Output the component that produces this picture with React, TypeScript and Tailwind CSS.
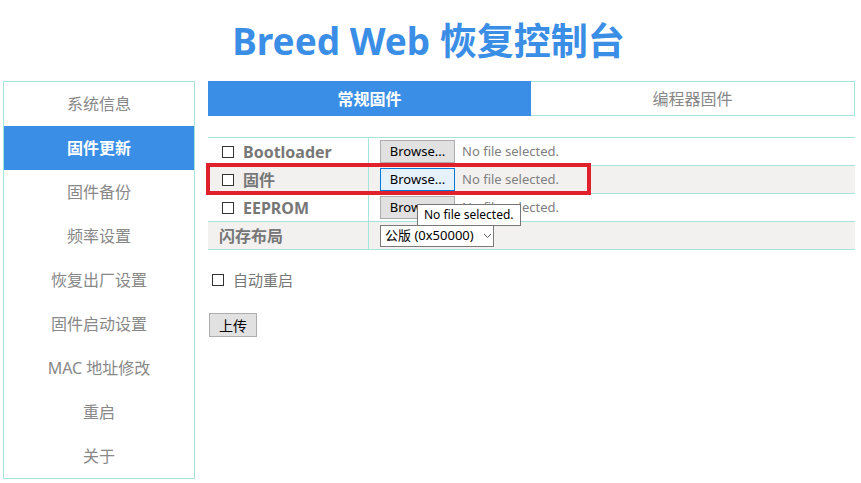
import React from "react";

const font = { fontFamily: '"Noto Sans", "Noto Sans CJK SC", sans-serif' };

function Box({ className = "" }: { className?: string }) {
  return <span className={"inline-block w-[12px] h-[12px] border border-[#333] bg-white " + className} />;
}

function BrowseBtn({ hover = false }: { hover?: boolean }) {
  return (
    <span
      className={
        "inline-flex items-center justify-center w-[75px] h-[23px] border text-[13px] text-black leading-none " +
        (hover ? "bg-[#e5f1fb] border-[#0078d7]" : "bg-[#e1e1e1] border-[#adadad]")
      }
    >
      Browse...
    </span>
  );
}

export default function App() {
  const items = ["系统信息", "固件更新", "固件备份", "频率设置", "恢复出厂设置", "固件启动设置", "MAC 地址修改", "重启", "关于"];
  return (
    <div className="w-[861px] h-[483px] bg-white relative overflow-hidden" style={font}>
      <div className="h-[81px] flex items-center justify-center">
        <h1 className="text-[37px] font-bold text-[#3a8ee6] leading-none -mt-[1px] -ml-[4px]">Breed Web 恢复控制台</h1>
      </div>
      <div className="flex">
        <div className="ml-[3px] w-[192px] h-[398px] border border-[#a6e3db] flex flex-col">
          {items.map((t, i) => (
            <div
              key={t}
              className={
                "h-[44px] flex items-center justify-center text-[16px] " +
                (i === 1 ? "bg-[#3a8ee6] text-white font-bold" : "text-[#888]")
              }
            >
              {t}
            </div>
          ))}
        </div>
        <div className="ml-[13px] w-[647px]">
          <div className="h-[35px] border border-[#a6e3db] flex">
            <div className="w-[323px] -my-px -ml-px bg-[#3a8ee6] text-white font-bold text-[16px] flex items-center justify-center">
              常规固件
            </div>
            <div className="flex-1 text-[#888] text-[16px] flex items-center justify-center">编程器固件</div>
          </div>
          <div className="mt-[21px] border-t border-[#a6e3db]">
            {[
              { label: "Bootloader", cb: true },
              { label: "固件", cb: true, hover: true },
              { label: "EEPROM", cb: true },
            ].map((r, i) => (
              <div
                key={r.label}
                className={"h-[28px] flex border-b border-[#a6e3db] " + (i % 2 === 1 ? "bg-[#f2f1f0]" : "bg-white")}
              >
                <div className="w-[161px] border-r border-[#a6e3db] flex items-center pl-[14px] gap-[9px]">
                  <Box />
                  <span className="text-[16px] font-bold text-[#777]">{r.label}</span>
                </div>
                <div className="flex items-center pl-[11px]">
                  <BrowseBtn hover={r.hover} />
                  <span className="ml-[7px] text-[13px] text-[#808080]">No file selected.</span>
                </div>
              </div>
            ))}
            <div className="h-[28px] flex border-b border-[#a6e3db] bg-[#f2f1f0]">
              <div className="w-[161px] border-r border-[#a6e3db] flex items-center pl-[11px]">
                <span className="text-[16px] font-bold text-[#777]">闪存布局</span>
              </div>
              <div className="flex items-center pl-[11px]">
                <span className="inline-flex items-center w-[114px] h-[22px] border border-[#7a7a7a] bg-white pl-[4px] text-[13px] text-black">
                  公版 (0x50000)
                  <svg className="ml-[9px]" width="9" height="6" viewBox="0 0 9 6">
                    <path d="M1 1 L4.5 4.5 L8 1" fill="none" stroke="#555" strokeWidth="1" />
                  </svg>
                </span>
              </div>
            </div>
          </div>
          <div className="mt-[19px] flex items-center gap-[9px] pl-[4px]">
            <Box />
            <span className="text-[15px] text-[#777]">自动重启</span>
          </div>
          <div className="mt-[21px] pl-[1px]">
            <span className="inline-flex items-center justify-center w-[48px] h-[24px] bg-[#e1e1e1] border border-[#adadad] text-[14px] text-black">
              上传
            </span>
          </div>
        </div>
      </div>
      <div className="absolute left-[206px] top-[163px] w-[385px] h-[32px] border-[4px] border-[#e0202a]" />
      <div className="absolute left-[417px] top-[204px] h-[22px] px-[6px] flex items-center bg-white border border-[#767676] text-[12px] text-black">
        No file selected.
      </div>
    </div>
  );
}
